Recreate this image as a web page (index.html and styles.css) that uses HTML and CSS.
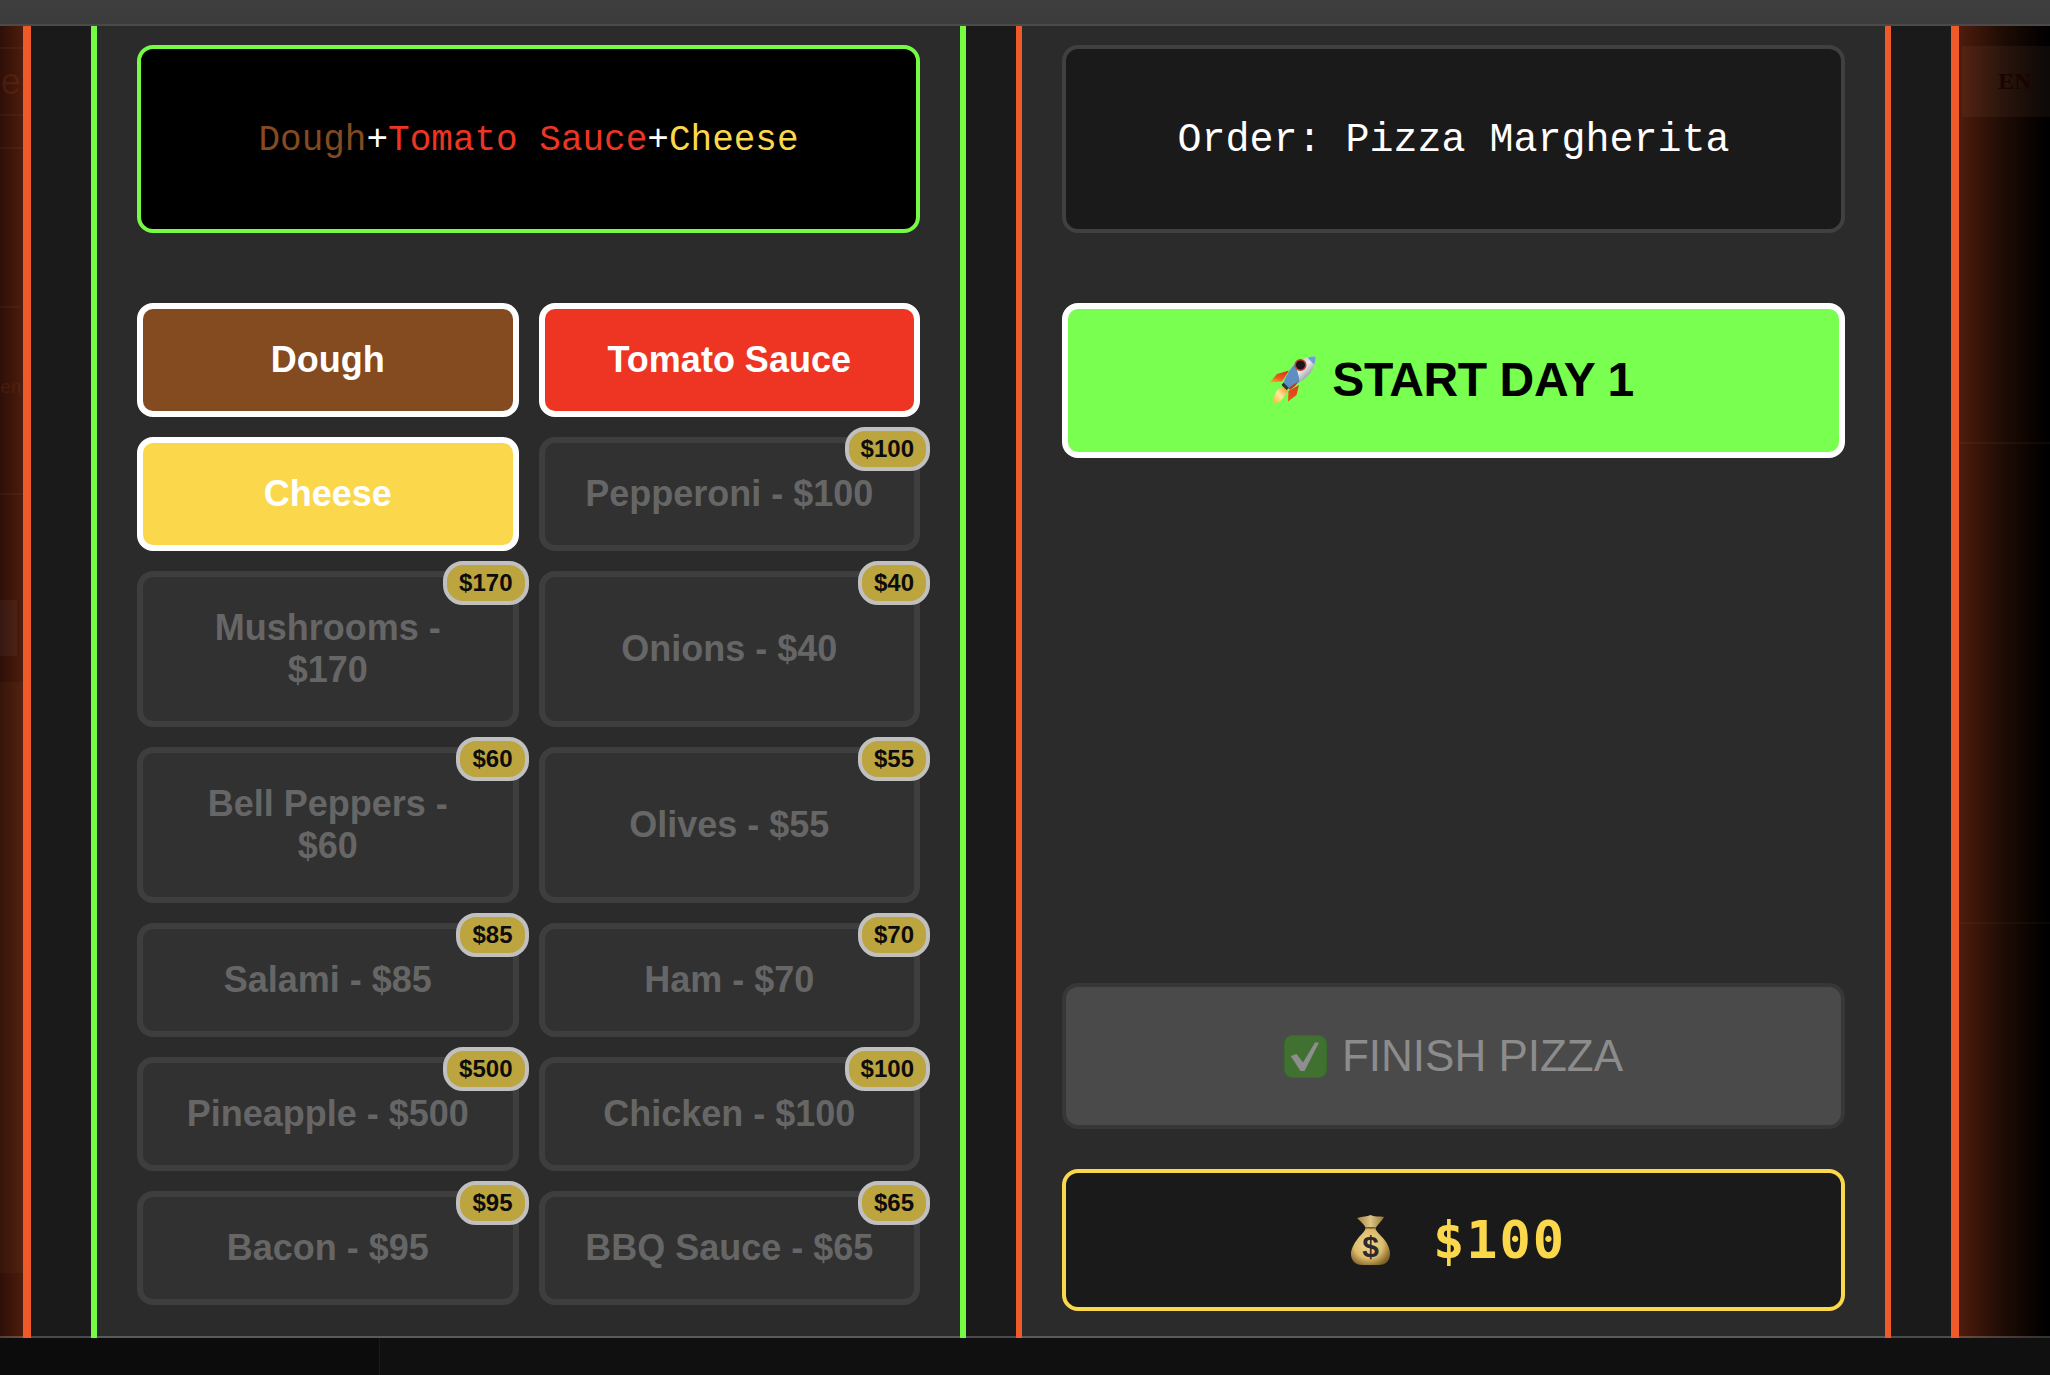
FILE: index.html
```html
<!DOCTYPE html>
<html lang="en">
<head>
<meta charset="utf-8">
<title>Pizza game</title>
<link rel="stylesheet" href="styles.css">
</head>
<body>
<header class="topbar"></header>
<main class="stage">
  <div class="backdrop">
    <span class="ghost-line gl1"></span>
    <span class="ghost-line gl2"></span>
    <span class="ghost-line gl3"></span>
    <span class="ghost-line gl4"></span>
    <span class="ghost-line gl5"></span>
    <span class="ghost-band"></span>
    <span class="ghost-tile"></span>
    <span class="ghost-text gt1">e</span>
    <span class="ghost-text gt2">en</span>
    <span class="ghost-lang">EN</span>
    <span class="ghost-right-line gr1"></span>
    <span class="ghost-right-line gr2"></span>
  </div>
  <div class="modal">
    <section class="panel panel-kitchen">
      <div class="display display-recipe"><span class="c-dough">Dough</span>+<span class="c-tomato">Tomato Sauce</span>+<span class="c-cheese">Cheese</span></div>
      <div class="grid">
        <button class="ing ing-dough">Dough</button>
        <button class="ing ing-tomato">Tomato Sauce</button>
        <button class="ing ing-cheese">Cheese</button>
        <button class="ing locked">Pepperoni - $100<span class="tag">$100</span></button>
        <button class="ing locked">Mushrooms - $170<span class="tag">$170</span></button>
        <button class="ing locked">Onions - $40<span class="tag">$40</span></button>
        <button class="ing locked">Bell Peppers - $60<span class="tag">$60</span></button>
        <button class="ing locked">Olives - $55<span class="tag">$55</span></button>
        <button class="ing locked">Salami - $85<span class="tag">$85</span></button>
        <button class="ing locked">Ham - $70<span class="tag">$70</span></button>
        <button class="ing locked">Pineapple - $500<span class="tag">$500</span></button>
        <button class="ing locked">Chicken - $100<span class="tag">$100</span></button>
        <button class="ing locked">Bacon - $95<span class="tag">$95</span></button>
        <button class="ing locked">BBQ Sauce - $65<span class="tag">$65</span></button>
      </div>
    </section>
    <section class="panel panel-order">
      <div class="display display-order">Order: Pizza Margherita</div>
      <button class="start">
        <svg class="ico-rocket" viewBox="6 7 47 47" aria-hidden="true">
          <defs>
            <linearGradient id="rb" x1="0.1" y1="0.1" x2="0.9" y2="0.9"><stop offset="0" stop-color="#a9b4bf"/><stop offset=".5" stop-color="#e6e8ea"/><stop offset=".8" stop-color="#8f9499"/><stop offset="1" stop-color="#5b5f66"/></linearGradient>
            <linearGradient id="rf" x1="0.8" y1="0" x2="0.2" y2="1"><stop offset="0" stop-color="#d9301c"/><stop offset=".6" stop-color="#ec5a20"/><stop offset="1" stop-color="#f7a92c"/></linearGradient>
            <linearGradient id="rf2" x1="0.8" y1="0" x2="0.3" y2="1"><stop offset="0" stop-color="#e03a1d"/><stop offset="1" stop-color="#e9531f"/></linearGradient>
            <linearGradient id="rt" x1="1" y1="0" x2="0" y2="1"><stop offset="0" stop-color="#e88a1e"/><stop offset=".55" stop-color="#ffe99a"/><stop offset="1" stop-color="#f5b53a"/></linearGradient>
          </defs>
          <path d="M26 21.500 L14 25 L6.500 33.500 L19 32.500 Z" fill="url(#rf)"/>
          <path d="M36 36 L33.500 46 L25 52.500 L25.500 42 Z" fill="url(#rf2)"/>
          <path d="M21 37 L14 41 L11 48 L10.500 54.500 L17 52.500 L22.500 46 L25 41 Z" fill="url(#rt)"/>
          <path d="M52.500 7.500 C46 7 38 9.500 32 15 C26 21 22 29 20.500 34 L25.500 39 C32 36.500 40 32 45.500 26 C51 20 53 13 52.500 7.500 Z" fill="url(#rb)"/>
          <path d="M32 15 C26 21 22 29 20.500 34 L25.500 39 C29 37.500 33 35 36.500 32.500 C36 27 34 21 32 15 Z" fill="#5f8ec2"/>
          <path d="M52.500 7.500 C49.500 7.300 47 7.800 44.500 8.700 L51 15.500 C52.300 12.800 52.800 10 52.500 7.500 Z" fill="#6f9fd0"/>
          <circle cx="37.500" cy="16" r="5.300" fill="#17171c" stroke="#d8322a" stroke-width="1.500"/>
          <path d="M20.500 33.500 L26 39 L23.500 41 L18.500 36 Z" fill="#2c333b"/>
          <path d="M25.500 39 L36 32 L32 37 L27 41 Z" fill="#c8301e"/>
        </svg>
        <span class="start-label">START DAY 1</span>
      </button>
      <button class="finish" disabled>
        <svg class="ico-check" viewBox="6 8 43 43" aria-hidden="true">
          <rect x="6.500" y="8.500" width="42" height="42" rx="8" fill="#417130" stroke="#3a6a2c"/>
          <path d="M12.700 29 L18.500 27 L25 35.500 L37 15.500 L41 15.500 L26.500 44 L22.500 44 Z" fill="#8e8e8e"/>
        </svg>
        <span>FINISH PIZZA</span>
      </button>
      <div class="money">
        <svg class="ico-bag" viewBox="10 7 40 52" aria-hidden="true">
          <defs>
            <radialGradient id="bg" cx=".45" cy=".45" r=".62"><stop offset="0" stop-color="#f0d995"/><stop offset=".6" stop-color="#dcbb6c"/><stop offset="1" stop-color="#7f6127"/></radialGradient>
            <linearGradient id="bn" x1="0" y1="0" x2="1" y2="0"><stop offset="0" stop-color="#a5833f"/><stop offset=".5" stop-color="#dcc486"/><stop offset="1" stop-color="#98772f"/></linearGradient>
          </defs>
          <path d="M25 20 C28 21.500 31 21.500 34 20 C35 24 37 26 41 30 C46 35 49.500 42 49 48 C48.500 55 43 58 38 58 L21 58 C16 58 10.500 55 10 48 C9.500 42 14 35 18 30 C22 26 24 24 25 20 Z" fill="url(#bg)"/>
          <path d="M16 11 C22 9 26 10 29.500 8 C33 10 38 9 43 10 C41 14 37 17 34.500 21 L25 21 C23 17 19 14 16 11 Z" fill="url(#bn)"/>
          <path d="M24.500 20 H34.500 V21.500 H24.500 Z" fill="#7a5c22"/>
          <text class="bag-dollar" x="29.500" y="50" text-anchor="middle">$</text>
        </svg>
        <span class="amount">$100</span>
      </div>
    </section>
  </div>
</main>
<footer class="dock"><div class="dock-left"></div><div class="dock-right"></div></footer>
</body>
</html>
```
FILE: styles.css
```css
* { box-sizing: border-box; }
html, body { margin: 0; padding: 0; height: 100%; }
body {
  width: 2050px;
  height: 1375px;
  overflow: hidden;
  display: flex;
  flex-direction: column;
  background: #0e0e0e;
  font-family: "Liberation Sans", Arial, sans-serif;
}
.topbar {
  flex: 0 0 26px;
  background: linear-gradient(#3e3e3e, #3b3b3b);
  border-bottom: 2px solid #4a4a4a;
}
.stage {
  position: relative;
  flex: 0 0 1312px;
  padding-left: 23px;
  overflow: hidden;
  background: linear-gradient(90deg, #2e0f08 0, #4e1c0c 23px, #4e1c0c 1959px, #1f0c05 2002px, #050100 2040px, #000 2050px);
  box-shadow: inset 0 -2px rgba(255,255,255,.2);
}
.backdrop { position: absolute; inset: 0 0 2px; pointer-events: none; overflow: hidden; }
.ghost-line, .ghost-right-line { position: absolute; height: 2px; background: rgba(255,170,80,.05); }
.ghost-line { left: 0; width: 23px; }
.gl1 { top: 21px; }
.gl2 { top: 88px; }
.gl3 { top: 121px; }
.gl4 { top: 280px; width: 20px; }
.gl5 { top: 467px; }
.ghost-band { position: absolute; left: 0; top: 656px; width: 23px; height: 591px; background: rgba(255,190,90,.035); }
.ghost-tile { position: absolute; left: 0; top: 574px; width: 17px; height: 56px; background: rgba(255,255,255,.04); }
.ghost-text { position: absolute; font-family: "Liberation Mono", monospace; color: rgba(255,140,60,.09); }
.gt1 { left: 0; top: 38px; font-size: 36px; }
.gt2 { left: 0; top: 352px; font-size: 18px; }
.ghost-lang {
  position: absolute; left: 1962px; top: 20px; width: 106px; height: 71px;
  display: flex; align-items: center; justify-content: center;
  background: rgba(255,200,150,.05);
  font: bold 24px "Liberation Serif", serif;
  color: #180500;
}
.ghost-right-line { left: 1959px; right: 0; }
.gr1 { top: 416px; background: rgba(255,170,80,.05); }
.gr2 { top: 896px; background: rgba(120,200,60,.05); }

.modal {
  position: relative;
  width: 1936px;
  height: 100%;
  padding: 0 60px;
  display: flex;
  gap: 50px;
  background: #1a1a1a;
  border-left: 8px solid #f05a28;
  border-right: 8px solid #f05a28;
  box-shadow: inset 0 -2px #4b4b4b;
}
.panel {
  flex: 0 0 875px;
  height: 100%;
  display: flex;
  flex-direction: column;
  padding: 19px 40px 0;
  background: #2b2b2b;
  box-shadow: inset 0 -2px #5a5a5a;
}
.panel-kitchen { border-left: 6px solid #76fb45; border-right: 6px solid #76fb45; }
.panel-order { border-left: 6px solid #f05a28; border-right: 6px solid #f05a28; }

.display {
  flex: 0 0 188px;
  display: flex;
  align-items: center;
  justify-content: center;
  margin-bottom: 70px;
  padding-top: 2px;
  border-radius: 16px;
  font-family: "Liberation Mono", "Courier New", monospace;
  color: #fff;
  white-space: pre;
}
.display-recipe { background: #000; border: 4px solid #76fb45; font-size: 36px; }
.display-order { background: #1a1a1a; border: 4px solid #404040; font-size: 40px; }
.c-dough { color: #844a20; }
.c-tomato { color: #ee3524; }
.c-cheese { color: #fbd84b; }

.grid {
  display: grid;
  grid-template-columns: 1fr 1fr;
  gap: 20px;
  align-items: stretch;
}
.ing {
  position: relative;
  padding: 30px;
  border: 6px solid #fff;
  border-radius: 16px;
  font: bold 36px/42px "Liberation Sans", Arial, sans-serif;
  color: #fff;
  text-align: center;
}
.ing-dough { background: #844a20; }
.ing-tomato { background: #ee3524; }
.ing-cheese { background: #fbd84b; }
.locked {
  background: #313131;
  border-color: #3e3e3e;
  color: #666;
}
.tag {
  position: absolute;
  top: -16px;
  right: -16px;
  padding: 4px 12px;
  border: 4px solid #c0c0c0;
  border-radius: 20px;
  background: #bca43f;
  color: #0c0c0c;
  font-size: 24px;
  line-height: 28px;
  white-space: nowrap;
}

.start {
  flex: 0 0 155px;
  display: flex;
  align-items: center;
  justify-content: center;
  gap: 16px;
  padding: 0 10px 0 6px;
  border: 6px solid #fff;
  border-radius: 16px;
  background: #78ff4f;
  color: #000;
  font: bold 48px "Liberation Sans", Arial, sans-serif;
}
.start-label { letter-spacing: -.4px; margin-bottom: 2px; }
.ico-rocket { width: 47px; height: 47px; flex: none; margin-bottom: 2px; }
.finish {
  flex: 0 0 146px;
  margin-top: auto;
  display: flex;
  align-items: center;
  justify-content: center;
  gap: 15px;
  border: 4px solid #373737;
  border-radius: 16px;
  background: #4a4a4a;
  color: #8c8c8c;
  font: 44px "Liberation Sans", Arial, sans-serif;
}
.ico-check { width: 43px; height: 43px; flex: none; }
.money {
  flex: 0 0 142px;
  margin: 40px 0 27px;
  display: flex;
  align-items: center;
  justify-content: center;
  gap: 42px;
  padding-left: 10px;
  border: 4px solid #fbd84b;
  border-radius: 16px;
  background: #1a1a1a;
  color: #fbd84b;
}
.ico-bag { width: 40px; height: 52px; flex: none; }
.bag-dollar { font: bold 30px "Liberation Sans", Arial, sans-serif; fill: #2e2a2c; }
.amount {
  font: bold 52px "DejaVu Sans Mono", monospace;
  letter-spacing: 2px;
}
.dock { flex: 1; display: flex; }
.dock-left { width: 380px; background: #0c0c0c; border-right: 1px solid #1a1a1a; }
.dock-right { flex: 1; background: #101010; }
```
